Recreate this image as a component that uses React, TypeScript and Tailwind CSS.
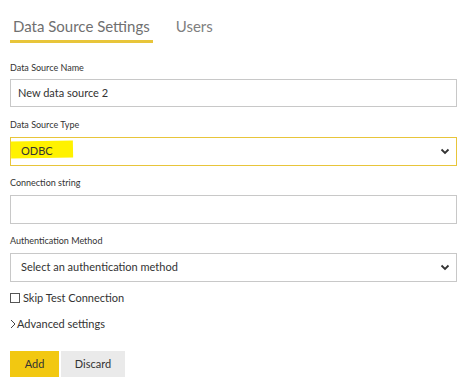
export default function App() {
  return (
    <div className="w-[474px] h-[385px] bg-white px-[10px] pt-[14px] text-[#333]" style={{ fontFamily: '"Segoe UI", Lato, sans-serif' }}>
      {/* Tabs */}
      <div className="flex items-end gap-[23px]">
        <div className="border-b-[3px] border-[#e8c53a] px-[3px] pb-[2px] text-[15px] leading-[24px] text-[#707070]">Data Source Settings</div>
        <div className="pb-[5px] text-[15px] leading-[24px] text-[#808080]">Users</div>
      </div>

      <div className="mt-[18px] w-[447px]">
        <label className="block text-[9px] leading-[14px]">Data Source Name</label>
        <div className="mt-[4px] flex h-[28px] items-center border border-[#c8c8c8] px-[7px] text-[11px]">New data source 2</div>

        <label className="mt-[11px] block text-[9px] leading-[14px]">Data Source Type</label>
        <div className="relative mt-[5px] flex h-[29px] items-center justify-between border border-[#e8c53a] pl-[10px] pr-[6px] text-[11px]">
          <span className="absolute left-0 top-[3px] h-[17px] w-[62px] -rotate-1 bg-[#fff200]" />
          <span className="relative">ODBC</span>
          <Chevron />
        </div>

        <label className="mt-[10px] block text-[9px] leading-[14px]">Connection string</label>
        <div className="mt-[5px] h-[29px] border border-[#c8c8c8]" />

        <label className="mt-[10px] block text-[9px] leading-[14px]">Authentication Method</label>
        <div className="mt-[5px] flex h-[29px] items-center justify-between border border-[#c8c8c8] pl-[10px] pr-[6px] text-[11px]">
          <span>Select an authentication method</span>
          <Chevron />
        </div>

        <div className="mt-[8px] flex items-center gap-[3px] text-[11px]">
          <span className="h-[10px] w-[10px] border border-[#555] bg-white" />
          <span>Skip Test Connection</span>
        </div>

        <div className="mt-[9px] flex items-center text-[11px]">
          <svg width="6" height="10" viewBox="0 0 6 10" className="mr-[1px]">
            <path d="M1 1l4 4-4 4" fill="none" stroke="#444" strokeWidth="1" />
          </svg>
          <span>Advanced settings</span>
        </div>

        <div className="mt-[19px] flex gap-[2px] text-[11px]">
          <button className="h-[26px] w-[49px] bg-[#f2c811] text-[#333]">Add</button>
          <button className="h-[26px] w-[64px] bg-[#eaeaea] text-[#333]">Discard</button>
        </div>
      </div>
    </div>
  );
}

function Chevron() {
  return (
    <svg width="10" height="7" viewBox="0 0 10 7">
      <path d="M1.5 1.5l3.5 3.5 3.5-3.5" fill="none" stroke="#333" strokeWidth="1.8" />
    </svg>
  );
}
